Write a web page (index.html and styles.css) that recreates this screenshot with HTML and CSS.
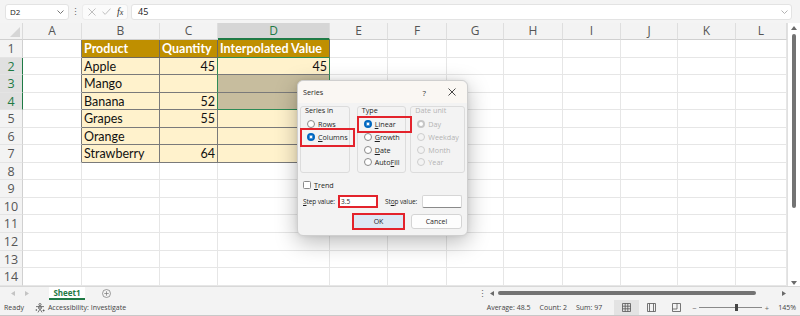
FILE: index.html
```html
<!DOCTYPE html>
<html lang="en">
<head>
<meta charset="utf-8">
<title>Series dialog</title>
<link rel="stylesheet" href="styles.css">
</head>
<body>
<div class="app">
  <div class="fbar">
    <div class="namebox"><span>D2</span><svg class="chev" width="7" height="4" viewBox="0 0 7 4"><path d="M0.5 0.5 L3.5 3.5 L6.5 0.5"/></svg></div>
    <span class="vdots">⋮</span>
    <div class="fxtools">
      <svg class="dim" width="8" height="8" viewBox="0 0 8 8"><path d="M0.5 0.5 L7.5 7.5 M7.5 0.5 L0.5 7.5"/></svg>
      <svg class="dim" width="9" height="7" viewBox="0 0 9 7"><path d="M0.5 3.8 L3.2 6.4 L8.5 0.6"/></svg>
      <span class="fx">f<small>x</small></span>
    </div>
    <div class="formula"><span>45</span><svg class="chev light" width="7" height="4" viewBox="0 0 7 4"><path d="M0.5 0.5 L3.5 3.5 L6.5 0.5"/></svg></div>
  </div>

  <div class="main">
    <div class="sheet">
      <div class="row">
        <div class="corner"><span class="tri"></span></div>
        <div class="ch">A</div><div class="ch">B</div><div class="ch">C</div><div class="ch sel">D</div><div class="ch">E</div><div class="ch">F</div><div class="ch">G</div><div class="ch">H</div><div class="ch">I</div><div class="ch">J</div><div class="ch">K</div><div class="ch">L</div>
      </div>
      <div class="row">
        <div class="rh">1</div>
        <div class="c edge"></div><div class="c hd">Product</div><div class="c hd">Quantity</div><div class="c hd gb">Interpolated Value</div>
        <div class="c"></div><div class="c"></div><div class="c"></div><div class="c"></div><div class="c"></div><div class="c"></div><div class="c"></div><div class="c"></div>
      </div>
      <div class="row">
        <div class="rh sel">2</div>
        <div class="c edge"></div><div class="c d">Apple</div><div class="c d num gr">45</div><div class="c d num gr">45</div>
        <div class="c"></div><div class="c"></div><div class="c"></div><div class="c"></div><div class="c"></div><div class="c"></div><div class="c"></div><div class="c"></div>
      </div>
      <div class="row">
        <div class="rh sel">3</div>
        <div class="c edge"></div><div class="c d">Mango</div><div class="c d num gr"></div><div class="c d shade gr"></div>
        <div class="c"></div><div class="c"></div><div class="c"></div><div class="c"></div><div class="c"></div><div class="c"></div><div class="c"></div><div class="c"></div>
      </div>
      <div class="row">
        <div class="rh sel">4</div>
        <div class="c edge"></div><div class="c d">Banana</div><div class="c d num gr">52</div><div class="c d shade gr gb"></div>
        <div class="c"></div><div class="c"></div><div class="c"></div><div class="c"></div><div class="c"></div><div class="c"></div><div class="c"></div><div class="c"></div>
      </div>
      <div class="row">
        <div class="rh">5</div>
        <div class="c edge"></div><div class="c d">Grapes</div><div class="c d num">55</div><div class="c d"></div>
        <div class="c"></div><div class="c"></div><div class="c"></div><div class="c"></div><div class="c"></div><div class="c"></div><div class="c"></div><div class="c"></div>
      </div>
      <div class="row">
        <div class="rh">6</div>
        <div class="c edge"></div><div class="c d">Orange</div><div class="c d num"></div><div class="c d"></div>
        <div class="c"></div><div class="c"></div><div class="c"></div><div class="c"></div><div class="c"></div><div class="c"></div><div class="c"></div><div class="c"></div>
      </div>
      <div class="row">
        <div class="rh">7</div>
        <div class="c edge"></div><div class="c d">Strawberry</div><div class="c d num">64</div><div class="c d"></div>
        <div class="c"></div><div class="c"></div><div class="c"></div><div class="c"></div><div class="c"></div><div class="c"></div><div class="c"></div><div class="c"></div>
      </div>
      <div class="row">
        <div class="rh">8</div>
        <div class="c"></div><div class="c"></div><div class="c"></div><div class="c"></div><div class="c"></div><div class="c"></div><div class="c"></div><div class="c"></div><div class="c"></div><div class="c"></div><div class="c"></div><div class="c"></div>
      </div>
      <div class="row">
        <div class="rh">9</div>
        <div class="c"></div><div class="c"></div><div class="c"></div><div class="c"></div><div class="c"></div><div class="c"></div><div class="c"></div><div class="c"></div><div class="c"></div><div class="c"></div><div class="c"></div><div class="c"></div>
      </div>
      <div class="row">
        <div class="rh">10</div>
        <div class="c"></div><div class="c"></div><div class="c"></div><div class="c"></div><div class="c"></div><div class="c"></div><div class="c"></div><div class="c"></div><div class="c"></div><div class="c"></div><div class="c"></div><div class="c"></div>
      </div>
      <div class="row">
        <div class="rh">11</div>
        <div class="c"></div><div class="c"></div><div class="c"></div><div class="c"></div><div class="c"></div><div class="c"></div><div class="c"></div><div class="c"></div><div class="c"></div><div class="c"></div><div class="c"></div><div class="c"></div>
      </div>
      <div class="row">
        <div class="rh">12</div>
        <div class="c"></div><div class="c"></div><div class="c"></div><div class="c"></div><div class="c"></div><div class="c"></div><div class="c"></div><div class="c"></div><div class="c"></div><div class="c"></div><div class="c"></div><div class="c"></div>
      </div>
      <div class="row">
        <div class="rh">13</div>
        <div class="c"></div><div class="c"></div><div class="c"></div><div class="c"></div><div class="c"></div><div class="c"></div><div class="c"></div><div class="c"></div><div class="c"></div><div class="c"></div><div class="c"></div><div class="c"></div>
      </div>
      <div class="row">
        <div class="rh">14</div>
        <div class="c"></div><div class="c"></div><div class="c"></div><div class="c"></div><div class="c"></div><div class="c"></div><div class="c"></div><div class="c"></div><div class="c"></div><div class="c"></div><div class="c"></div><div class="c"></div>
      </div>
    </div>
    <div class="vscroll">
      <svg width="6" height="4" viewBox="0 0 6 4"><path class="fill dark" d="M0 4 L3 0 L6 4 Z"/></svg>
      <div class="vthumb"></div>
      <svg width="6" height="4" viewBox="0 0 6 4"><path class="fill dark" d="M0 0 L6 0 L3 4 Z"/></svg>
    </div>
  </div>

  <div class="tabs">
    <div class="tabnav">
      <svg width="4" height="5" viewBox="0 0 4 5"><path class="fill" d="M4 0 L0 2.5 L4 5 Z"/></svg>
      <svg width="4" height="5" viewBox="0 0 4 5"><path class="fill" d="M0 0 L4 2.5 L0 5 Z"/></svg>
    </div>
    <div class="tab">Sheet1</div>
    <svg class="plus" width="9" height="9" viewBox="0 0 9 9"><circle cx="4.5" cy="4.5" r="4"/><path d="M4.5 2.3 V6.7 M2.3 4.5 H6.7"/></svg>
    <div class="hscroll">
      <span class="vdots">⋮</span>
      <svg width="4" height="5" viewBox="0 0 4 5"><path class="fill dark" d="M4 0 L0 2.5 L4 5 Z"/></svg>
      <div class="hthumb"></div>
      <svg width="4" height="5" viewBox="0 0 4 5"><path class="fill dark" d="M0 0 L4 2.5 L0 5 Z"/></svg>
    </div>
  </div>

  <div class="status">
    <span class="ready">Ready</span>
    <span class="acc">
      <svg width="10" height="10" viewBox="0 0 10 10"><circle cx="5" cy="1.6" r="1.1"/><path d="M1 3.6 H9 M5 3.6 V6 M5 6 L3 9.4 M5 6 L7 9.4 M3.6 3.6 L3.8 6 M6.4 3.6 L6.2 6"/><path d="M8.6 6.5 L8.6 8.5 M7.6 7.5 L9.6 7.5 M1.4 6.3 L1.4 7.7 M0.7 7 L2.1 7"/></svg>
      Accessibility: Investigate
    </span>
    <span class="spacer"></span>
    <span class="stat">Average: 48.5</span>
    <span class="stat">Count: 2</span>
    <span class="stat last">Sum: 97</span>
    <span class="view on"><svg width="9" height="9" viewBox="0 0 9 9"><path d="M0.5 0.5 H8.5 V8.5 H0.5 Z M3.2 0.5 V8.5 M5.8 0.5 V8.5 M0.5 3.2 H8.5 M0.5 5.8 H8.5"/></svg></span>
    <span class="view"><svg width="9" height="9" viewBox="0 0 9 9"><path d="M0.5 0.5 H8.5 V8.5 H0.5 Z M2.5 0.5 V8.5 M6.5 0.5 V8.5"/></svg></span>
    <span class="view"><svg width="9" height="9" viewBox="0 0 9 9"><path d="M0.5 0.5 H8.5 V8.5 H0.5 Z M0.5 6 H5 V0.5"/></svg></span>
    <span class="zoomctl">
      <span class="pm">−</span>
      <span class="slider"><span class="knob"></span></span>
      <span class="pm">+</span>
    </span>
    <span class="pct">145%</span>
  </div>

  <div class="dialog">
    <div class="dlg-title">
      <span class="dlg-name">Series</span>
      <span class="help">?</span>
      <svg class="close" width="8" height="8" viewBox="0 0 8 8"><path d="M0.5 0.5 L7.5 7.5 M7.5 0.5 L0.5 7.5"/></svg>
    </div>
    <div class="dlg-body">
      <div class="groups">
        <div class="group g-series">
          <div class="glabel">Series in</div>
          <div class="opt"><span class="radio"></span><span><u>R</u>ows</span></div>
          <div class="opt mark m-cols"><span class="radio on"></span><span><u>C</u>olumns</span></div>
        </div>
        <div class="group g-type">
          <div class="glabel">Type</div>
          <div class="opt mark m-lin"><span class="radio on"></span><span><u>L</u>inear</span></div>
          <div class="opt"><span class="radio"></span><span><u>G</u>rowth</span></div>
          <div class="opt"><span class="radio"></span><span><u>D</u>ate</span></div>
          <div class="opt"><span class="radio"></span><span>Auto<u>F</u>ill</span></div>
        </div>
        <div class="group g-date disabled">
          <div class="glabel">Date unit</div>
          <div class="opt"><span class="radio on"></span><span>Day</span></div>
          <div class="opt"><span class="radio"></span><span>Weekday</span></div>
          <div class="opt"><span class="radio"></span><span>Month</span></div>
          <div class="opt"><span class="radio"></span><span>Year</span></div>
        </div>
      </div>
      <div class="trend"><span class="check"></span><span><u>T</u>rend</span></div>
      <div class="values">
        <span class="vlabel"><u>S</u>tep value:</span>
        <span class="input step">3.5</span>
        <span class="vlabel stop">St<u>o</u>p value:</span>
        <span class="input"></span>
      </div>
      <div class="buttons">
        <span class="btn ok">OK</span>
        <span class="btn">Cancel</span>
      </div>
    </div>
  </div>
</div>
</body>
</html>
```

FILE: styles.css
```css
* { box-sizing: border-box; margin: 0; padding: 0; }
html, body { width: 800px; height: 316px; overflow: hidden; }
body { background: #fff; font-family: "Open Sans", "Noto Sans", sans-serif; color: #262626; }
svg path, svg circle { fill: none; stroke: #555; stroke-width: 0.9; }
svg path.fill { fill: #9a9a9a; stroke: none; }
svg path.fill.dark { fill: #6a6a6a; }

.app { position: relative; width: 800px; height: 316px; display: flex; flex-direction: column; }

/* formula bar */
.fbar { height: 23px; flex: none; display: flex; align-items: center; padding: 0 8px 0 5px; background: #f4f4f4; }
.namebox { width: 64px; height: 16px; background: #fff; border: 1px solid #e3e3e3; border-radius: 3px; display: flex; align-items: center; justify-content: space-between; padding: 0 4px 0 4px; font-size: 8px; color: #222; }
.chev path { stroke: #666; }
.chev.light path { stroke: #aaa; }
.vdots { width: 13px; text-align: center; font-size: 9px; color: #666; line-height: 1; }
.fxtools { width: 46px; height: 16px; display: flex; align-items: center; gap: 6px; padding-left: 5px; background: #fbfbfb; border: 1px solid #ececec; border-radius: 3px; }
.fxtools .dim path { stroke: #b8b8b8; }
.fx { font-family: "Liberation Serif", serif; font-style: italic; font-size: 10px; color: #333; line-height: 1; }
.fx small { font-size: 8px; }
.formula { flex: 1; margin-left: 3px; height: 16px; background: #fff; border: 1px solid #e3e3e3; border-radius: 3px; display: flex; align-items: center; justify-content: space-between; padding: 0 3px 0 6px; font-size: 9px; color: #222; }

/* sheet */
.main { display: flex; flex: none; }
.sheet { width: 787px; display: grid; grid-template-columns: 23px 59px 78px 58px 112px 58px 59px 57px 59px 58px 57px 58px 51px; grid-template-rows: 17px repeat(14, 17.55px); }
.row { display: contents; }
.corner { background: #f3f3f3; border-right: 1px solid #dadada; border-bottom: 1px solid #d0d0d0; position: relative; }
.corner .tri { position: absolute; right: 2px; bottom: 2px; width: 0; height: 0; border-left: 10px solid transparent; border-bottom: 10px solid #d6d6d6; }
.ch { background: #f3f3f3; border-right: 1px solid #dedede; border-bottom: 1px solid #d0d0d0; font-size: 12px; color: #555; text-align: center; line-height: 16px; }
.ch.sel { background: #d6d6d6; color: #1f7a45; border-bottom: 2px solid #1f7a45; }
.rh { background: #f3f3f3; border-right: 1px solid #d0d0d0; border-bottom: 1px solid #e4e4e4; font-size: 12.5px; color: #555; text-align: center; line-height: 17px; }
.rh.sel { background: #e0e0e0; color: #1f7a45; border-right: 1px solid #1f7a45; }
.c { border-right: 1px solid #e6e6e6; border-bottom: 1px solid #e6e6e6; font-family: Lato, "Open Sans", sans-serif; font-size: 12.5px; line-height: 17px; padding: 0 2px 0 2px; white-space: nowrap; overflow: hidden; color: #111; }
.c.edge { border-right-color: #7a7a7a; }
.c.hd { background: #bf8f00; color: #fff; font-weight: 700; border-right-color: #6e6a5e; border-bottom-color: #6e6a5e; }
.c.d { background: #fff2cc; border-right-color: #7a7a7a; border-bottom-color: #7a7a7a; }
.c.num { text-align: right; }
.c.shade { background: #c7bd9e; }
.c.gr { border-right-color: #2e8b57; }
.c.gb { border-bottom-color: #2e8b57; }

.vscroll { flex: 1; display: flex; flex-direction: column; align-items: center; padding: 3px 0 1px; gap: 4px; border-left: 1px solid #e0e0e0; }
.vthumb { width: 4px; height: 174px; background: #737373; border-radius: 2px; }
.vscroll svg:last-child { margin-top: auto; }

/* sheet tabs */
.tabs { flex: 1; display: flex; align-items: stretch; background: #f3f3f3; border-top: 1px solid #d8d8d8; }
.tabnav { display: flex; align-items: center; gap: 10px; padding-left: 11px; width: 49px; }
.tabnav path.fill { fill: #c4c4c4; }
.tab { width: 36px; background: #fff; color: #1f7a45; font-weight: 700; font-size: 8px; display: flex; align-items: center; justify-content: center; border-bottom: 2px solid #1f7a45; }
.plus { align-self: center; margin-left: 17px; }
.plus circle, .plus path { stroke: #777; stroke-width: 0.7; }
.hscroll { margin-left: auto; width: 322px; display: flex; align-items: center; gap: 4px; padding-right: 14px; }
.hscroll .vdots { width: 8px; }
.hthumb { width: 258px; height: 4px; background: #737373; border-radius: 2px; margin-right: auto; }

/* status bar */
.status { height: 16px; flex: none; display: flex; align-items: stretch; background: #f3f3f3; border-bottom: 1px solid #c8c8c8; font-size: 7px; color: #444; padding-left: 4px; }
.status > span { display: flex; align-items: center; }
.acc { margin-left: 11px; gap: 3px; }
.acc svg circle, .acc svg path { stroke: #555; stroke-width: 0.8; }
.spacer { flex: 1; }
.stat { margin-right: 9px; white-space: nowrap; }
.stat.last { margin-right: 12px; }
.view { width: 25px; flex: none; justify-content: center; }
.view svg path { stroke: #555; stroke-width: 0.8; }
.view.on { background: #e3e3e3; }
.zoomctl { gap: 2.5px; margin-left: 3px; }
.pm { font-size: 7.5px; color: #666; width: 4.5px; text-align: center; justify-content: center; }
.slider { position: relative; width: 63px; height: 1px; background: #8a8a8a; }
.knob { position: absolute; left: 36px; top: -3px; width: 3px; height: 7px; background: #444; }
.pct { margin-left: 9px; padding-right: 4px; }

/* dialog */
.dialog { position: absolute; left: 297px; top: 80px; width: 171px; height: 156px; background: #f3f3f3; border: 1px solid #cfcfcf; border-radius: 6px; box-shadow: 0 6px 22px rgba(0,0,0,0.28), 0 0 4px rgba(0,0,0,0.08); font-size: 7.2px; color: #1f1f1f; }
.dlg-title { height: 22px; display: flex; align-items: center; padding: 0 11px 0 5px; background: #faf7f3; border-radius: 6px 6px 0 0; }
.dlg-name { flex: 1; }
.help { font-size: 8px; color: #333; margin-right: 22px; }
.close path { stroke: #333; stroke-width: 0.9; }
.dlg-body { padding: 3px 2px 0 2px; }
.groups { display: flex; gap: 7px; }
.group { height: 67px; border: 1px solid #dcdcdc; border-radius: 3px; padding: 0 0 0 6px; }
.g-series { width: 50px; }
.g-type { width: 50px; }
.g-date { width: 55px; margin-left: -3px; }
.glabel { height: 9px; line-height: 9px; margin: -1px 0 3px -2px; }
.opt { height: 12.7px; display: flex; align-items: center; gap: 3px; position: relative; white-space: nowrap; }
.radio { width: 8px; height: 8px; border-radius: 50%; border: 1px solid #8a8a8a; background: #fff; flex: none; }
.radio.on { border: 2.2px solid #0067c0; background: #fff; box-shadow: inset 0 0 0 0.6px #0067c0; }
.disabled { color: #b4b4b4; }
.disabled .radio { border-color: #cdcdcd; background: #f3f3f3; }
.disabled .radio.on { border: 2.2px solid #c6c6c6; background: #fff; box-shadow: none; }
.mark::after { content: ""; position: absolute; border: 2px solid #e3232c; }
.m-cols::after { left: -7px; right: -6px; top: -3px; bottom: -4px; }
.m-lin::after { left: -7px; right: -7px; top: -2px; bottom: -2px; }

.trend { display: flex; align-items: center; gap: 3px; height: 10px; margin: 7px 0 0 3px; }
.check { width: 8px; height: 8px; border: 1px solid #8a8a8a; border-radius: 1.5px; background: #fff; }
.values { display: flex; align-items: center; height: 13px; margin-top: 5px; padding-left: 3px; }
.vlabel { width: 35px; flex: none; white-space: nowrap; font-size: 6.5px; letter-spacing: -0.1px; }
.vlabel.stop { width: 37px; margin-left: 7px; }
.input { width: 40px; height: 13px; flex: none; background: #fff; border: 1px solid #d6d6d6; border-bottom-color: #8a8a8a; border-radius: 2px; font-size: 6.5px; line-height: 9px; padding-left: 2px; }
.input.step { border: 2px solid #e3232c; border-radius: 0; padding-left: 1px; }
.buttons { display: flex; align-items: center; justify-content: flex-end; gap: 6px; margin-top: 5px; padding-right: 3px; }
.btn { width: 51px; height: 15px; display: flex; align-items: center; justify-content: center; background: #fdfdfd; border: 1px solid #d4d4d4; border-radius: 3px; font-size: 7px; }
.btn.ok { width: 53px; height: 17px; background: #dde8f4; border: 2px solid #e3232c; border-radius: 0; }
```
